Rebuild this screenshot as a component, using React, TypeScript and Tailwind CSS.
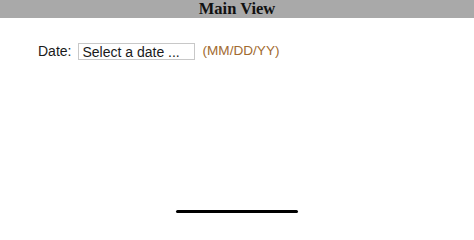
import React from "react";

const App = () => {
  return (
    <div className="relative flex h-[218px] w-[474px] flex-col bg-white font-['Liberation_Sans',Arial,sans-serif]">
      <div className="flex h-[18px] items-center justify-center bg-[#a9a9a9]">
        <h1 className="font-['Liberation_Serif','Times_New_Roman',serif] text-[16.5px] font-bold leading-none text-[#111]">
          Main View
        </h1>
      </div>

      <div className="mt-[23px] flex items-center pl-[38px] text-[14px] text-[#1a1a1a]">
        <label htmlFor="date" className="mr-[7px]">
          Date:
        </label>
        <input
          id="date"
          type="text"
          placeholder="Select a date ..."
          className="h-[17px] w-[117px] border border-[#c8c8c8] px-[3px] text-[14px] leading-none placeholder:text-[#1a1a1a] focus:outline-none"
        />
        <span className="ml-[7px] text-[13.6px] text-[#a26b31]">(MM/DD/YY)</span>
      </div>

      <div className="mt-auto mb-[5px] flex justify-center">
        <div className="h-[3px] w-[122px] rounded-full bg-black" />
      </div>
    </div>
  );
};

export default App;
